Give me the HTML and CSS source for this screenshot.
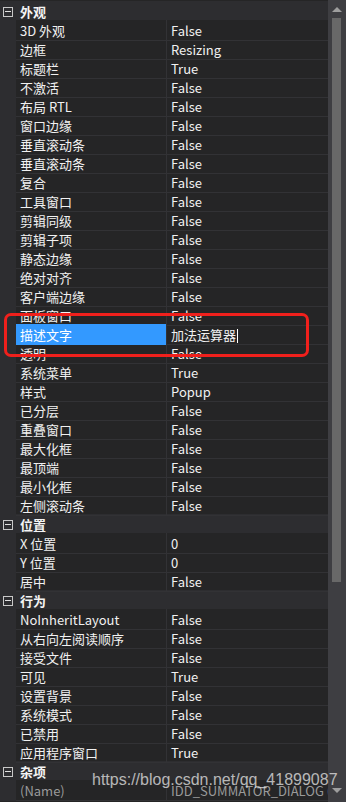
FILE: index.html
```html
<!DOCTYPE html>
<html lang="zh-CN">

<head>
    <meta charset="UTF-8" />
    <meta name="viewport" content="width=device-width, initial-scale=1.0" />
    <title>属性</title>
    <link rel="stylesheet" href="styles.css">
</head>

<body>
    <div class="panel">
        <div class="list">
            <div class="cat"><span class="toggle"></span><span class="cat-name">外观</span></div>
            <div class="row"><span class="gutter"></span><span class="name">3D 外观</span><span class="val">False</span></div>
            <div class="row"><span class="gutter"></span><span class="name">边框</span><span class="val">Resizing</span></div>
            <div class="row"><span class="gutter"></span><span class="name">标题栏</span><span class="val">True</span></div>
            <div class="row"><span class="gutter"></span><span class="name">不激活</span><span class="val">False</span></div>
            <div class="row"><span class="gutter"></span><span class="name">布局 RTL</span><span class="val">False</span></div>
            <div class="row"><span class="gutter"></span><span class="name">窗口边缘</span><span class="val">False</span></div>
            <div class="row"><span class="gutter"></span><span class="name">垂直滚动条</span><span class="val">False</span></div>
            <div class="row"><span class="gutter"></span><span class="name">垂直滚动条</span><span class="val">False</span></div>
            <div class="row"><span class="gutter"></span><span class="name">复合</span><span class="val">False</span></div>
            <div class="row"><span class="gutter"></span><span class="name">工具窗口</span><span class="val">False</span></div>
            <div class="row"><span class="gutter"></span><span class="name">剪辑同级</span><span class="val">False</span></div>
            <div class="row"><span class="gutter"></span><span class="name">剪辑子项</span><span class="val">False</span></div>
            <div class="row"><span class="gutter"></span><span class="name">静态边缘</span><span class="val">False</span></div>
            <div class="row"><span class="gutter"></span><span class="name">绝对对齐</span><span class="val">False</span></div>
            <div class="row"><span class="gutter"></span><span class="name">客户端边缘</span><span class="val">False</span></div>
            <div class="row"><span class="gutter"></span><span class="name">面板窗口</span><span class="val">False</span></div>
            <div class="row selected"><span class="gutter"></span><span class="name">描述文字</span><span class="val">加法运算器<i class="caret"></i></span></div>
            <div class="row"><span class="gutter"></span><span class="name">透明</span><span class="val">False</span></div>
            <div class="row"><span class="gutter"></span><span class="name">系统菜单</span><span class="val">True</span></div>
            <div class="row"><span class="gutter"></span><span class="name">样式</span><span class="val">Popup</span></div>
            <div class="row"><span class="gutter"></span><span class="name">已分层</span><span class="val">False</span></div>
            <div class="row"><span class="gutter"></span><span class="name">重叠窗口</span><span class="val">False</span></div>
            <div class="row"><span class="gutter"></span><span class="name">最大化框</span><span class="val">False</span></div>
            <div class="row"><span class="gutter"></span><span class="name">最顶端</span><span class="val">False</span></div>
            <div class="row"><span class="gutter"></span><span class="name">最小化框</span><span class="val">False</span></div>
            <div class="row"><span class="gutter"></span><span class="name">左侧滚动条</span><span class="val">False</span></div>

            <div class="cat"><span class="toggle"></span><span class="cat-name">位置</span></div>
            <div class="row"><span class="gutter"></span><span class="name">X 位置</span><span class="val">0</span></div>
            <div class="row"><span class="gutter"></span><span class="name">Y 位置</span><span class="val">0</span></div>
            <div class="row"><span class="gutter"></span><span class="name">居中</span><span class="val">False</span></div>

            <div class="cat"><span class="toggle"></span><span class="cat-name">行为</span></div>
            <div class="row"><span class="gutter"></span><span class="name">NoInheritLayout</span><span class="val">False</span></div>
            <div class="row"><span class="gutter"></span><span class="name">从右向左阅读顺序</span><span class="val">False</span></div>
            <div class="row"><span class="gutter"></span><span class="name">接受文件</span><span class="val">False</span></div>
            <div class="row"><span class="gutter"></span><span class="name">可见</span><span class="val">True</span></div>
            <div class="row"><span class="gutter"></span><span class="name">设置背景</span><span class="val">False</span></div>
            <div class="row"><span class="gutter"></span><span class="name">系统模式</span><span class="val">False</span></div>
            <div class="row"><span class="gutter"></span><span class="name">已禁用</span><span class="val">False</span></div>
            <div class="row"><span class="gutter"></span><span class="name">应用程序窗口</span><span class="val">True</span></div>

            <div class="cat"><span class="toggle"></span><span class="cat-name">杂项</span></div>
            <div class="row dim"><span class="gutter"></span><span class="name">(Name)</span><span class="val">IDD_SUMMATOR_DIALOG (Dialog)</span></div>
        </div>

        <div class="scrollbar">
            <span class="arrow up"></span>
            <span class="thumb"></span>
            <span class="arrow down"></span>
        </div>
    </div>

    <!-- 标注框和水印 -->
    <div class="mark"></div>
    <div class="watermark">https://blog.csdn.net/qq_41899087</div>
</body>

</html>
```

FILE: styles.css
```css
* {
    margin: 0;
    padding: 0;
    box-sizing: border-box;
}

body {
    position: relative;
    width: 346px;
    height: 802px;
    overflow: hidden;
    background: #252526;
    color: #f1f1f1;
    font-family: "Noto Sans CJK SC", "Noto Sans", sans-serif;
    font-size: 13px;
}

.panel {
    display: flex;
    height: 100%;
}

.list {
    flex: 1;
    padding-top: 1px;
    overflow: hidden;
}

.cat {
    display: flex;
    align-items: flex-start;
    height: 19px;
    background: #2d2d30;
}

.toggle {
    position: relative;
    width: 10px;
    height: 10px;
    margin: 6px 6px 0 3px;
    border: 1px solid #c8c8c8;
}

.toggle::after {
    content: "";
    position: absolute;
    left: 1px;
    right: 1px;
    top: 3px;
    height: 1px;
    background: #e0e0e0;
}

.cat-name {
    padding: 2px 0 0 1px;
    line-height: 18px;
    font-weight: bold;
    color: #f4f4f4;
}

.row {
    display: grid;
    grid-template-columns: 16px 150px 1fr;
    height: 19px;
}

.gutter {
    background: #2d2d30;
}

.name,
.val {
    padding: 2px 0 0 4px;
    line-height: 18px;
    border-bottom: 1px solid #323235;
    white-space: nowrap;
}

.val {
    border-left: 1px solid #323235;
}

.selected .name {
    background: #3399ff;
    color: #ffffff;
    border-bottom-color: #3399ff;
}

.caret {
    display: inline-block;
    width: 1px;
    height: 14px;
    margin-left: 1px;
    vertical-align: -3px;
    background: #ffffff;
}

.dim .name,
.dim .val {
    color: #9a9a9a;
}

.scrollbar {
    display: flex;
    flex-direction: column;
    align-items: center;
    width: 18px;
    background: #3e3e42;
}

.arrow {
    width: 0;
    height: 0;
    border-left: 5px solid transparent;
    border-right: 5px solid transparent;
}

.arrow.up {
    margin-top: 7px;
    border-bottom: 5px solid #9e9e9e;
}

.arrow.down {
    margin-top: 206px;
    border-top: 5px solid #9e9e9e;
}

.thumb {
    width: 9px;
    height: 564px;
    margin-top: 6px;
    margin-left: -1px;
    background: #686868;
}

.mark {
    position: absolute;
    left: 4px;
    top: 313px;
    width: 305px;
    height: 44px;
    border: 3px solid #f0201c;
    border-radius: 7px;
}

.watermark {
    position: absolute;
    left: 92px;
    top: 771px;
    font-family: "Liberation Sans", Arial, sans-serif;
    font-size: 16px;
    color: rgba(225, 225, 225, 0.78);
    white-space: nowrap;
}
```
